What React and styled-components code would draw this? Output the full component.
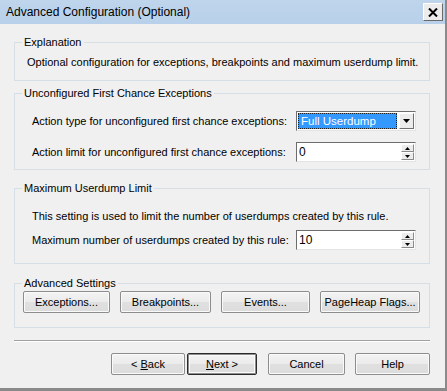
import React from "react";
import styled, { createGlobalStyle } from "styled-components";

const Global = createGlobalStyle`
  html, body { margin: 0; padding: 0; background: #f0f0f0; }
  body { font-family: "Liberation Sans", Arial, sans-serif; font-size: 11px; color: #000; white-space: nowrap; }
`;

const Window = styled.div`
  width: 447px;
  height: 391px;
  box-sizing: border-box;
  background: #f0f0f0;
  border-right: 2px solid #8a8a8a;
  border-bottom: 3px solid #8a8a8a;
  display: flex;
  flex-direction: column;
  overflow: hidden;
`;

const TitleBar = styled.div`
  height: 24px;
  flex: none;
  background: linear-gradient(#bed5ec, #b8d0e9);
  display: flex;
  align-items: center;
  justify-content: space-between;
  padding: 0 2px 0 6px;
`;

const Title = styled.span`
  font-size: 12px;
  color: #000;
`;

const CloseBtn = styled.div`
  width: 20px;
  height: 18px;
  box-sizing: border-box;
  border: 1px solid;
  border-color: #fff #6a6a6a #6a6a6a #fff;
  background: #ececec;
  display: flex;
  align-items: center;
  justify-content: center;
`;

const Body = styled.div`
  flex: 1;
  display: flex;
  flex-direction: column;
  padding: 11px 15px 0 14px;
`;

const Group = styled.fieldset`
  margin: ${(p) => p.$mt || "0px"} 0 0 0;
  border: 1px solid #d5dfe5;
  border-radius: 0;
  padding: ${(p) => p.$pad || "6px 12px 8px 12px"};
  min-width: 0;
  display: flex;
  flex-direction: column;
  gap: ${(p) => p.$gap || "0px"};
  height: ${(p) => p.$h};
  box-sizing: border-box;
`;

const Legend = styled.legend`
  padding: 0 2px;
  margin-left: ${(p) => p.$ml || "0px"};
  font-size: 11px;
  line-height: 14px;
`;

const Text = styled.div`
  line-height: 14px;
`;

const Row = styled.div`
  display: flex;
  align-items: center;
  justify-content: space-between;
  height: 20px;
`;

const Combo = styled.div`
  width: 120px;
  height: 20px;
  box-sizing: border-box;
  border: 1px solid;
  border-color: #6d6d6d #e3e3e3 #e3e3e3 #6d6d6d;
  background: #fff;
  display: flex;
  padding: 1px;
`;

const ComboValue = styled.div`
  flex: 1;
  background: #3399ff;
  color: #fff;
  outline: 1px dotted #222;
  outline-offset: -1px;
  padding-left: 3px;
  line-height: 16px;
  margin-right: 2px;
  font-size: 11.5px;
`;

const ComboArrow = styled.div`
  width: 15px;
  box-sizing: border-box;
  border: 1px solid;
  border-color: #fff #707070 #707070 #fff;
  background: #ececec;
  display: flex;
  align-items: center;
  justify-content: center;
`;

const Spin = styled.div`
  width: 120px;
  height: 20px;
  box-sizing: border-box;
  border: 1px solid;
  border-color: #6d6d6d #e3e3e3 #e3e3e3 #6d6d6d;
  background: #fff;
  display: flex;
  padding: 1px;
`;

const SpinValue = styled.div`
  flex: 1;
  line-height: 16px;
  padding-left: 1px;
  font-size: 12px;
`;

const SpinButtons = styled.div`
  width: 13px;
  display: flex;
  flex-direction: column;
`;

const SpinBtn = styled.div`
  flex: 1;
  box-sizing: border-box;
  border: 1px solid;
  border-color: #fff #8a8a8a #8a8a8a #fff;
  background: #ececec;
  display: flex;
  align-items: center;
  justify-content: center;
`;

const ButtonRow = styled.div`
  display: flex;
  justify-content: ${(p) => p.$justify || "space-between"};
  gap: ${(p) => p.$gap || "0px"};
`;

const Button = styled.div`
  width: ${(p) => p.$w}px;
  height: 22px;
  margin-left: ${(p) => p.$ml || 0}px;
  box-sizing: border-box;
  border: 1px solid ${(p) => (p.$default ? "#2b2b2b" : "#8d8d8d")};
  box-shadow: ${(p) => (p.$default ? "inset 0 0 0 1px #8d8d8d, inset 0 0 0 2px #fafafa" : "inset 0 0 0 1px #fafafa")};
  border-radius: 2px;
  background: linear-gradient(#f3f3f3, #ebebeb 50%, #e0e0e0 51%, #dcdcdc);
  display: flex;
  align-items: center;
  justify-content: center;
  font-size: 11px;
`;

const Separator = styled.div`
  height: 0;
  border-top: 1px solid #a0a0a0;
  border-bottom: 1px solid #fff;
  margin: 12px 0 11px;
`;

const Tri = ({ up }) => (
  <svg width="5" height="3" viewBox="0 0 5 3">
    <path d={up ? "M2.5 0 L5 3 L0 3Z" : "M0 0 L5 0 L2.5 3Z"} fill="#000" />
  </svg>
);

const Spinner = ({ value }) => (
  <Spin>
    <SpinValue>{value}</SpinValue>
    <SpinButtons>
      <SpinBtn><Tri up /></SpinBtn>
      <SpinBtn><Tri /></SpinBtn>
    </SpinButtons>
  </Spin>
);

export default function App() {
  return (
    <>
      <Global />
      <Window>
        <TitleBar>
          <Title>Advanced Configuration (Optional)</Title>
          <CloseBtn>
            <svg width="10" height="9" viewBox="0 0 10 9">
              <path d="M1 0.5 L9 8.5 M9 0.5 L1 8.5" stroke="#000" strokeWidth="2" />
            </svg>
          </CloseBtn>
        </TitleBar>
        <Body>
          <Group $h="46px" $pad="6px 12px 6px 12px">
            <Legend $ml="-5px">Explanation</Legend>
            <Text>Optional configuration for exceptions, breakpoints and maximum userdump limit.</Text>
          </Group>
          <Group $mt="5px" $h="84px" $pad="11px 13px 8px 17px" $gap="11px">
            <Legend $ml="-10px">Unconfigured First Chance Exceptions</Legend>
            <Row>
              <span>Action type for unconfigured first chance exceptions:</span>
              <Combo>
                <ComboValue>Full Userdump</ComboValue>
                <ComboArrow>
                  <svg width="7" height="4" viewBox="0 0 7 4">
                    <path d="M0 0 L7 0 L3.5 4Z" fill="#000" />
                  </svg>
                </ComboArrow>
              </Combo>
            </Row>
            <Row>
              <span>Action limit for unconfigured first chance exceptions:</span>
              <Spinner value="0" />
            </Row>
          </Group>
          <Group $mt="11px" $h="83px" $pad="14px 13px 8px 17px" $gap="7px">
            <Legend $ml="-10px">Maximum Userdump Limit</Legend>
            <Text>This setting is used to limit the number of userdumps created by this rule.</Text>
            <Row>
              <span>Maximum number of userdumps created by this rule:</span>
              <Spinner value="10" />
            </Row>
          </Group>
          <Group $mt="12px" $h="52px" $pad="1px 9px 6px 8px">
            <Legend $ml="-1px">Advanced Settings</Legend>
            <ButtonRow>
              <Button $w={87}>Exceptions...</Button>
              <Button $w={91}>Breakpoints...</Button>
              <Button $w={89}>Events...</Button>
              <Button $w={100}>PageHeap Flags...</Button>
            </ButtonRow>
          </Group>
          <Separator />
          <ButtonRow $justify="flex-end">
            <Button $w={74}><span>&lt; <u>B</u>ack</span></Button>
            <Button $w={70} $ml={2} $default><span><u>N</u>ext &gt;</span></Button>
            <Button $w={77} $ml={11}>Cancel</Button>
            <Button $w={75} $ml={10}>Help</Button>
          </ButtonRow>
        </Body>
      </Window>
    </>
  );
}
